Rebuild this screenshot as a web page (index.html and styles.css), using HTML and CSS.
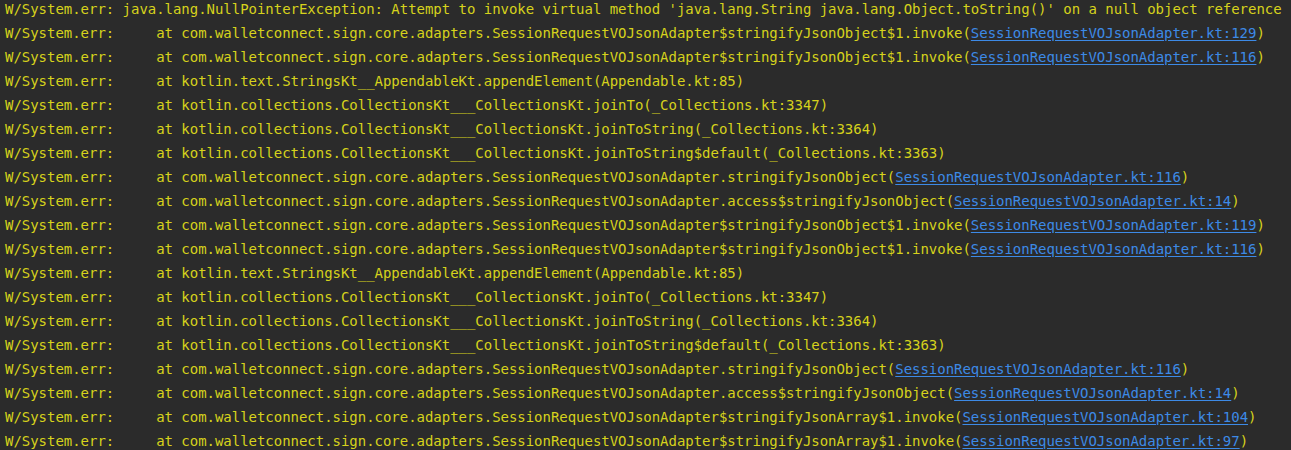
FILE: index.html
```html
<!DOCTYPE html>
<html>
<head>
<meta charset="utf-8">
<link rel="stylesheet" href="styles.css">
</head>
<body>
<div class="log">
<div class="row">W/System.err: java.lang.NullPointerException: Attempt to invoke virtual method 'java.lang.String java.lang.Object.toString()' on a null object reference</div>
<div class="row">W/System.err:     at com.walletconnect.sign.core.adapters.SessionRequestVOJsonAdapter$stringifyJsonObject$1.invoke(<span class="link">SessionRequestVOJsonAdapter.kt:129</span>)</div>
<div class="row">W/System.err:     at com.walletconnect.sign.core.adapters.SessionRequestVOJsonAdapter$stringifyJsonObject$1.invoke(<span class="link">SessionRequestVOJsonAdapter.kt:116</span>)</div>
<div class="row">W/System.err:     at kotlin.text.StringsKt__AppendableKt.appendElement(Appendable.kt:85)</div>
<div class="row">W/System.err:     at kotlin.collections.CollectionsKt___CollectionsKt.joinTo(_Collections.kt:3347)</div>
<div class="row">W/System.err:     at kotlin.collections.CollectionsKt___CollectionsKt.joinToString(_Collections.kt:3364)</div>
<div class="row">W/System.err:     at kotlin.collections.CollectionsKt___CollectionsKt.joinToString$default(_Collections.kt:3363)</div>
<div class="row">W/System.err:     at com.walletconnect.sign.core.adapters.SessionRequestVOJsonAdapter.stringifyJsonObject(<span class="link">SessionRequestVOJsonAdapter.kt:116</span>)</div>
<div class="row">W/System.err:     at com.walletconnect.sign.core.adapters.SessionRequestVOJsonAdapter.access$stringifyJsonObject(<span class="link">SessionRequestVOJsonAdapter.kt:14</span>)</div>
<div class="row">W/System.err:     at com.walletconnect.sign.core.adapters.SessionRequestVOJsonAdapter$stringifyJsonObject$1.invoke(<span class="link">SessionRequestVOJsonAdapter.kt:119</span>)</div>
<div class="row">W/System.err:     at com.walletconnect.sign.core.adapters.SessionRequestVOJsonAdapter$stringifyJsonObject$1.invoke(<span class="link">SessionRequestVOJsonAdapter.kt:116</span>)</div>
<div class="row">W/System.err:     at kotlin.text.StringsKt__AppendableKt.appendElement(Appendable.kt:85)</div>
<div class="row">W/System.err:     at kotlin.collections.CollectionsKt___CollectionsKt.joinTo(_Collections.kt:3347)</div>
<div class="row">W/System.err:     at kotlin.collections.CollectionsKt___CollectionsKt.joinToString(_Collections.kt:3364)</div>
<div class="row">W/System.err:     at kotlin.collections.CollectionsKt___CollectionsKt.joinToString$default(_Collections.kt:3363)</div>
<div class="row">W/System.err:     at com.walletconnect.sign.core.adapters.SessionRequestVOJsonAdapter.stringifyJsonObject(<span class="link">SessionRequestVOJsonAdapter.kt:116</span>)</div>
<div class="row">W/System.err:     at com.walletconnect.sign.core.adapters.SessionRequestVOJsonAdapter.access$stringifyJsonObject(<span class="link">SessionRequestVOJsonAdapter.kt:14</span>)</div>
<div class="row">W/System.err:     at com.walletconnect.sign.core.adapters.SessionRequestVOJsonAdapter$stringifyJsonArray$1.invoke(<span class="link">SessionRequestVOJsonAdapter.kt:104</span>)</div>
<div class="row">W/System.err:     at com.walletconnect.sign.core.adapters.SessionRequestVOJsonAdapter$stringifyJsonArray$1.invoke(<span class="link">SessionRequestVOJsonAdapter.kt:97</span>)</div>
</div>
</body>
</html>
```
FILE: styles.css
```css
html, body {
  margin: 0;
  padding: 0;
  background: #2b2b2b;
  overflow: hidden;
}
.log {
  margin-top: -3px;
  padding-left: 5px;
  font-family: "DejaVu Sans Mono", "Liberation Mono", monospace;
  font-size: 14px;
  letter-spacing: -0.03px;
  line-height: 24px;
  color: #d6d21c;
}
.row {
  white-space: pre;
  height: 24px;
}
.link {
  color: #3d8ae6;
  text-decoration: underline;
  text-underline-offset: 2px;
}
```
